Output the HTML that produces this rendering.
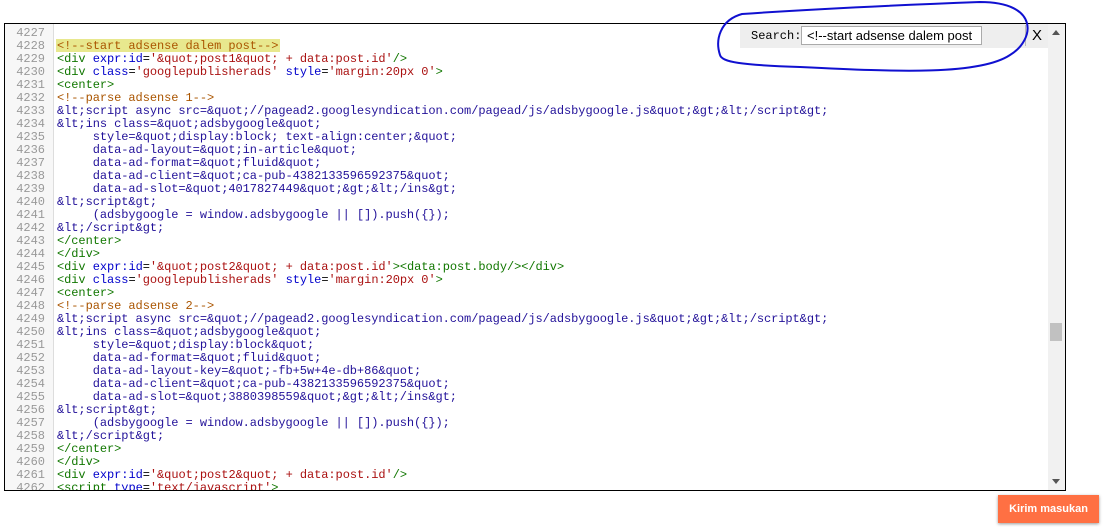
<!DOCTYPE html>
<html><head><meta charset="utf-8"><style>
body{margin:0;width:1103px;height:527px;background:#fff;position:relative;overflow:hidden;font-family:"Liberation Sans",sans-serif}
#ed{position:absolute;left:4px;top:23px;width:1060px;height:466px;border:1px solid #000;overflow:hidden;background:#fff}
#gut{position:absolute;left:0;top:0;width:48px;height:100%;background:#f7f7f7;border-right:1px solid #ddd}
.l{position:absolute;left:0;height:13px;line-height:13px;font:12px "Liberation Mono",monospace;white-space:pre}
.n{width:40px;text-align:right;color:#999}
.c{left:52px;color:#000;letter-spacing:-0.06px}
.t{color:#170}.a{color:#00c}.s{color:#a11}.m{color:#a50}.e{color:#219}
#sb{position:absolute;right:0;top:0;width:17px;height:100%;background:#f1f1f1}
#thumb{position:absolute;left:2px;top:299px;width:12px;height:18px;background:#c1c1c1}
#sp{position:absolute;left:735px;top:0;width:309px;height:24px;background:#eee}
#btn{position:absolute;left:998px;top:495px;width:101px;height:28px;background:#ff7043;color:#fff;font-size:11px;font-weight:bold;line-height:28px;text-align:center;box-shadow:0 1px 3px rgba(0,0,0,.4)}
</style></head><body>
<div id="ed">
<div id="gut"></div>
<div style="position:absolute;left:51px;top:15px;width:224px;height:13px;background:#e8e88e"></div>
<div id="lines"></div>
<div id="sp">
<span style="position:absolute;left:11px;top:5px;font:12px 'Liberation Mono',monospace;color:#000">Search:</span>
<div style="position:absolute;left:61px;top:2px;width:174px;height:17px;border:1px solid #aaa;background:#fff;font-size:13px;line-height:17px;padding-left:5px;white-space:nowrap;overflow:hidden">&lt;!--start adsense dalem post</div>
<div style="position:absolute;left:285px;top:1px;width:22px;height:21px;border-left:1px solid #bbb;font-size:15px;line-height:22px;text-align:center">X</div>
</div>
<div id="sb"><div style="position:absolute;left:4px;top:6px;border:4px solid transparent;border-bottom:5px solid #555;border-top:0"></div><div id="thumb"></div><div style="position:absolute;left:4px;bottom:6px;border:4px solid transparent;border-top:5px solid #555;border-bottom:0"></div></div>
</div>
<svg style="position:absolute;left:0;top:0" width="1103" height="527"><path d="M742,14 C800,10 900,5 980,2 C1040,2 1035,40 1010,55 C980,75 900,72 800,67 C740,65 722,62 720,55 C715,40 720,20 742,14 Z" fill="none" stroke="#1010d0" stroke-width="2"/></svg>
<div id="btn">Kirim masukan</div>
<script>
var L=[
['',''],
['<span class="m">&lt;!--start adsense dalem post--&gt;</span>'],
['<span class="t">&lt;div</span> <span class="a">expr:id</span>=<span class="s">\'&amp;quot;post1&amp;quot; + data:post.id\'</span><span class="t">/&gt;</span>'],
['<span class="t">&lt;div</span> <span class="a">class</span>=<span class="s">\'googlepublisherads\'</span> <span class="a">style</span>=<span class="s">\'margin:20px 0\'</span><span class="t">&gt;</span>'],
['<span class="t">&lt;center&gt;</span>'],
['<span class="m">&lt;!--parse adsense 1--&gt;</span>'],
['<span class="e">&amp;lt;script async src=&amp;quot;//pagead2.googlesyndication.com/pagead/js/adsbygoogle.js&amp;quot;&amp;gt;&amp;lt;/script&amp;gt;</span>'],
['<span class="e">&amp;lt;ins class=&amp;quot;adsbygoogle&amp;quot;</span>'],
['<span class="e">     style=&amp;quot;display:block; text-align:center;&amp;quot;</span>'],
['<span class="e">     data-ad-layout=&amp;quot;in-article&amp;quot;</span>'],
['<span class="e">     data-ad-format=&amp;quot;fluid&amp;quot;</span>'],
['<span class="e">     data-ad-client=&amp;quot;ca-pub-4382133596592375&amp;quot;</span>'],
['<span class="e">     data-ad-slot=&amp;quot;4017827449&amp;quot;&amp;gt;&amp;lt;/ins&amp;gt;</span>'],
['<span class="e">&amp;lt;script&amp;gt;</span>'],
['<span class="e">     (adsbygoogle = window.adsbygoogle || []).push({});</span>'],
['<span class="e">&amp;lt;/script&amp;gt;</span>'],
['<span class="t">&lt;/center&gt;</span>'],
['<span class="t">&lt;/div&gt;</span>'],
['<span class="t">&lt;div</span> <span class="a">expr:id</span>=<span class="s">\'&amp;quot;post2&amp;quot; + data:post.id\'</span><span class="t">&gt;&lt;data:post.body/&gt;&lt;/div&gt;</span>'],
['<span class="t">&lt;div</span> <span class="a">class</span>=<span class="s">\'googlepublisherads\'</span> <span class="a">style</span>=<span class="s">\'margin:20px 0\'</span><span class="t">&gt;</span>'],
['<span class="t">&lt;center&gt;</span>'],
['<span class="m">&lt;!--parse adsense 2--&gt;</span>'],
['<span class="e">&amp;lt;script async src=&amp;quot;//pagead2.googlesyndication.com/pagead/js/adsbygoogle.js&amp;quot;&amp;gt;&amp;lt;/script&amp;gt;</span>'],
['<span class="e">&amp;lt;ins class=&amp;quot;adsbygoogle&amp;quot;</span>'],
['<span class="e">     style=&amp;quot;display:block&amp;quot;</span>'],
['<span class="e">     data-ad-format=&amp;quot;fluid&amp;quot;</span>'],
['<span class="e">     data-ad-layout-key=&amp;quot;-fb+5w+4e-db+86&amp;quot;</span>'],
['<span class="e">     data-ad-client=&amp;quot;ca-pub-4382133596592375&amp;quot;</span>'],
['<span class="e">     data-ad-slot=&amp;quot;3880398559&amp;quot;&amp;gt;&amp;lt;/ins&amp;gt;</span>'],
['<span class="e">&amp;lt;script&amp;gt;</span>'],
['<span class="e">     (adsbygoogle = window.adsbygoogle || []).push({});</span>'],
['<span class="e">&amp;lt;/script&amp;gt;</span>'],
['<span class="t">&lt;/center&gt;</span>'],
['<span class="t">&lt;/div&gt;</span>'],
['<span class="t">&lt;div</span> <span class="a">expr:id</span>=<span class="s">\'&amp;quot;post2&amp;quot; + data:post.id\'</span><span class="t">/&gt;</span>'],
['<span class="t">&lt;script</span> <span class="a">type</span>=<span class="s">\'text/javascript\'</span><span class="t">&gt;</span>']
];
var h='';
for(var i=0;i<L.length;i++){var y=2+13*i;
h+='<div class="l n" style="top:'+y+'px">'+(4227+i)+'</div><div class="l c" style="top:'+y+'px">'+L[i][0]+'</div>';}
document.getElementById('lines').innerHTML=h;
</script>
</body></html>
